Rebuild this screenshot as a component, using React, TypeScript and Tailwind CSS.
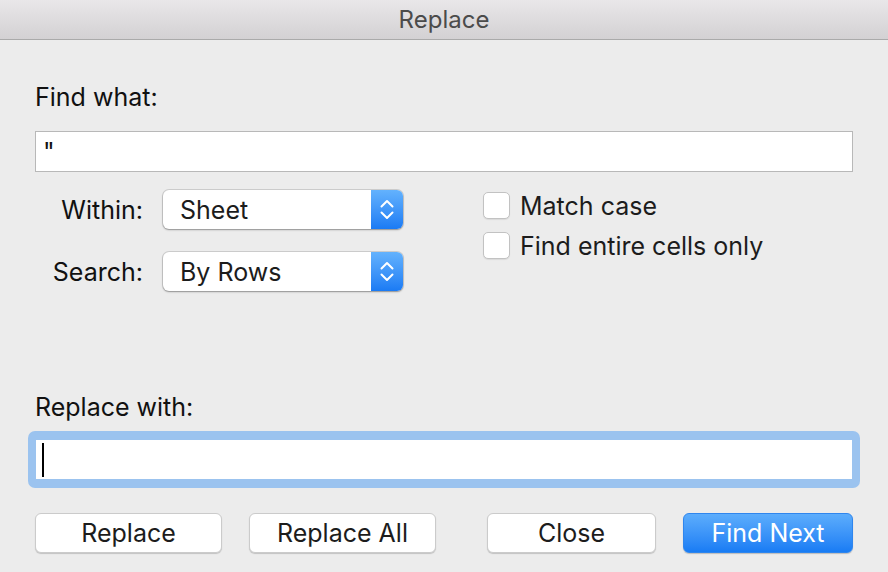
import React from "react";

const font = { fontFamily: "Inter, 'Liberation Sans', Arial, sans-serif" };

function Chevrons() {
  return (
    <svg width="32" height="39" viewBox="0 0 32 39" fill="none">
      <path d="M10.5 16.5L16 11L21.5 16.5" stroke="white" strokeWidth="2" strokeLinecap="round" strokeLinejoin="round" />
      <path d="M10.5 22.5L16 28L21.5 22.5" stroke="white" strokeWidth="2" strokeLinecap="round" strokeLinejoin="round" />
    </svg>
  );
}

function PopUp({ value }: { value: string }) {
  return (
    <div className="flex h-[39px] w-[240px] rounded-[6px] bg-white shadow-[0_0_0_1px_rgba(0,0,0,0.12),0_1px_2px_rgba(0,0,0,0.3)]">
      <div className="flex flex-1 items-center pl-[17px] text-[25px] leading-[30px] text-[#1c1c1c]">{value}</div>
      <div className="w-[32px] rounded-r-[6px] bg-gradient-to-b from-[#63b2fd] to-[#1a7bf4]">
        <Chevrons />
      </div>
    </div>
  );
}

function Check({ label }: { label: string }) {
  return (
    <div className="flex h-[27px] items-center">
      <div className="h-[27px] w-[27px] rounded-[5px] border border-[#c2c2c2] bg-white shadow-[0_1px_1px_rgba(0,0,0,0.08)]" />
      <span className="ml-[10px] text-[25px] leading-[30px] text-[#1c1c1c]">{label}</span>
    </div>
  );
}

function Button({ label, width, primary }: { label: string; width: string; primary?: boolean }) {
  const base = "flex h-[40px] items-center justify-center rounded-[6px] text-[25px] leading-[30px]";
  if (primary) {
    return (
      <div className={`${base} ${width} border border-[#2f86ee] bg-gradient-to-b from-[#5cadfc] to-[#187cf4] text-white shadow-[0_1px_1px_rgba(0,0,0,0.2)]`}>
        {label}
      </div>
    );
  }
  return (
    <div className={`${base} ${width} border border-[#cbcbcb] bg-white text-[#1c1c1c] shadow-[0_1px_1px_rgba(0,0,0,0.18)]`}>
      {label}
    </div>
  );
}

export default function App() {
  return (
    <div className="h-[572px] w-[888px] overflow-hidden bg-[#ececec]" style={font}>
      {/* Title bar */}
      <div className="flex h-[40px] items-center justify-center border-b border-[#aaaaaa] bg-gradient-to-b from-[#e9e7e9] to-[#d3d1d3]">
        <span className="text-[24px] leading-[30px] text-[#4b4b4b]">Replace</span>
      </div>

      <div className="px-[35px]">
        {/* Find what */}
        <div className="mt-[42px] text-[25px] leading-[30px] text-[#111]">Find what:</div>
        <div className="mt-[19px] flex h-[41px] w-[818px] items-center border border-[#b8b8b8] bg-white pl-[7px] text-[25px] leading-[30px] text-[#111]">
          "
        </div>

        {/* Options */}
        <div className="mt-[18px] flex">
          <div className="flex flex-col gap-[23px]">
            <div className="flex items-center">
              <span className="w-[108px] pr-0 text-right text-[25px] leading-[30px] text-[#111]">Within:</span>
              <div className="ml-[20px]">
                <PopUp value="Sheet" />
              </div>
            </div>
            <div className="flex items-center">
              <span className="w-[108px] text-right text-[25px] leading-[30px] text-[#111]">Search:</span>
              <div className="ml-[20px]">
                <PopUp value="By Rows" />
              </div>
            </div>
          </div>
          <div className="ml-[80px] mt-[2px] flex flex-col gap-[13px]">
            <Check label="Match case" />
            <Check label="Find entire cells only" />
          </div>
        </div>

        {/* Replace with */}
        <div className="mt-[101px] text-[25px] leading-[30px] text-[#111]">Replace with:</div>
        <div className="mx-[-7px] mt-[9px] h-[57px] w-[832px] rounded-[7px] bg-[#9bc3ef] px-[8px] py-[9px]">
          <div className="flex h-[39px] items-center bg-white pl-[6px]">
            <div className="h-[34px] w-[2px] bg-black" />
          </div>
        </div>

        {/* Buttons */}
        <div className="mt-[25px] flex">
          <Button label="Replace" width="w-[187px]" />
          <div className="ml-[27px]">
            <Button label="Replace All" width="w-[187px]" />
          </div>
          <div className="ml-[51px]">
            <Button label="Close" width="w-[169px]" />
          </div>
          <div className="ml-[27px]">
            <Button label="Find Next" width="w-[170px]" primary />
          </div>
        </div>
      </div>
    </div>
  );
}
